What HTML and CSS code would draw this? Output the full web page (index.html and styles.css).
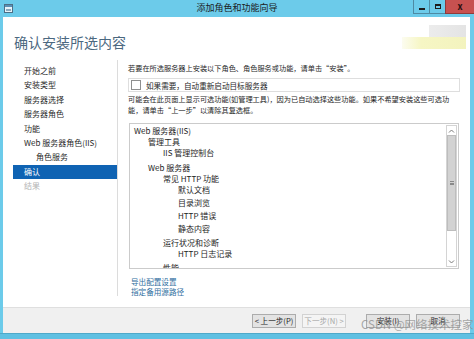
FILE: index.html
```html
<!DOCTYPE html>
<html lang="zh-CN">

<head>
    <meta charset="UTF-8">
    <title>添加角色和功能向导</title>
    <link rel="stylesheet" href="styles.css">
</head>

<body>
    <div class="window">
        <!-- Title bar -->
        <div class="titlebar">
            <svg class="app-icon" width="9" height="9" viewBox="0 0 9 9">
                <rect x="0.5" y="0.5" width="8" height="8" fill="#e8f4fa" stroke="#4d6f86"/>
                <rect x="1" y="1" width="7" height="2" fill="#5a8fb5"/>
                <rect x="2" y="5" width="5" height="2" fill="#8aa9bf"/>
            </svg>
            <span class="title">添加角色和功能向导</span>
            <div class="controls">
                <span class="ctl"><i class="min"></i></span>
                <span class="ctl"><i class="max"></i></span>
                <span class="ctl close">x</span>
            </div>
        </div>

        <div class="client">
            <!-- Page header -->
            <div class="header">
                <h1>确认安装所选内容</h1>
                <div class="server">
                    <div class="server-top"></div>
                    <div class="server-bottom"></div>
                </div>
            </div>

            <div class="main">
                <!-- Wizard steps -->
                <ul class="steps">
                    <li>开始之前</li>
                    <li>安装类型</li>
                    <li>服务器选择</li>
                    <li>服务器角色</li>
                    <li>功能</li>
                    <li>Web 服务器角色(IIS)</li>
                    <li class="sub">角色服务</li>
                    <li class="active">确认</li>
                    <li class="disabled">结果</li>
                </ul>

                <!-- Confirmation content -->
                <div class="content">
                    <p class="lead">若要在所选服务器上安装以下角色、角色服务或功能，请单击“安装”。</p>
                    <label class="restart">
                        <span class="checkbox"></span>
                        <span>如果需要，自动重新启动目标服务器</span>
                    </label>
                    <p class="note">可能会在此页面上显示可选功能(如管理工具)，因为已自动选择这些功能。如果不希望安装这些可选功<br>能，请单击“上一步”以清除其复选框。</p>

                    <div class="listbox">
                        <ul class="tree">
                            <li class="l0">Web 服务器(IIS)</li>
                            <li class="l1">管理工具</li>
                            <li class="l2">IIS 管理控制台</li>
                            <li class="l1 gap4">Web 服务器</li>
                            <li class="l2">常见 HTTP 功能</li>
                            <li class="l3">默认文档</li>
                            <li class="l3 gap2">目录浏览</li>
                            <li class="l3 gap2">HTTP 错误</li>
                            <li class="l3 gap2">静态内容</li>
                            <li class="l2 gap3">运行状况和诊断</li>
                            <li class="l3">HTTP 日志记录</li>
                            <li class="l2 gap3">性能</li>
                        </ul>
                        <div class="scrollbar">
                            <span class="arrow up">
                                <svg width="7" height="4" viewBox="0 0 7 4"><path d="M1 3.5 L3.5 1 L6 3.5" fill="none" stroke="#7a7a7a"/></svg>
                            </span>
                            <span class="thumb"><i></i></span>
                            <span class="track"></span>
                            <span class="arrow down">
                                <svg width="7" height="4" viewBox="0 0 7 4"><path d="M1 0.5 L3.5 3 L6 0.5" fill="none" stroke="#7a7a7a"/></svg>
                            </span>
                        </div>
                    </div>

                    <div class="links">
                        <a href="#">导出配置设置</a>
                        <a href="#">指定备用源路径</a>
                    </div>
                </div>
            </div>

            <!-- Buttons -->
            <div class="footer">
                <button class="btn">&lt; 上一步(P)</button>
                <button class="btn" disabled>下一步(N) &gt;</button>
                <button class="btn primary">安装(I)</button>
                <button class="btn">取消</button>
            </div>
        </div>

        <div class="frame-bottom"></div>
        <span class="watermark">CSDN @网络技术控家</span>
    </div>
</body>

</html>
```

FILE: styles.css
```css
body {
    margin: 0;
    font-family: "Noto Sans CJK SC", "Noto Sans", sans-serif;
    background-color: #6ccbea;
    color: #1e1e1e;
}

.window {
    position: relative;
    width: 474px;
    height: 339px;
    display: flex;
    flex-direction: column;
    overflow: hidden;
}

/* Title bar */
.titlebar {
    height: 17px;
    display: flex;
    align-items: flex-start;
    position: relative;
    background-color: #6ccbea;
}

.app-icon {
    margin: 4px 0 0 4px;
}

.title {
    position: absolute;
    left: 0;
    right: 0;
    top: 2px;
    text-align: center;
    font-size: 9px;
    line-height: 12px;
    color: #1b1b1b;
}

.controls {
    margin-left: auto;
    display: flex;
}

.ctl {
    width: 16px;
    height: 14px;
    border: 1px solid #4e8aa3;
    border-top: 0;
    border-right: 0;
    display: flex;
    align-items: center;
    justify-content: center;
    box-sizing: border-box;
}

.ctl .min {
    width: 6px;
    height: 2px;
    margin-top: 4px;
    background: #1d1d1d;
}

.ctl .max {
    width: 6px;
    height: 5px;
    border: 1px solid #1d1d1d;
    border-top-width: 2px;
    box-sizing: border-box;
}

.ctl.close {
    width: 29px;
    background-color: #c75150;
    border-color: #8f3a3a;
    color: #2b0f0f;
    font-size: 9px;
    font-weight: bold;
    line-height: 12px;
}

/* Client area */
.client {
    flex: 1;
    margin: 0 4px 0 3px;
    background: #fff;
    display: flex;
    flex-direction: column;
}

.header {
    height: 41px;
    display: flex;
    justify-content: space-between;
    align-items: flex-start;
}

.header h1 {
    margin: 16px 0 0 11px;
    font-size: 14px;
    line-height: 18px;
    font-weight: normal;
    color: #4b6880;
}

.server {
    margin: 8px 4px 0 0;
    display: flex;
    flex-direction: column;
    align-items: flex-end;
}

.server-top {
    width: 37px;
    height: 12px;
    background: linear-gradient(90deg, #ececec, #e4e4e4);
}

.server-bottom {
    width: 64px;
    height: 12px;
    background: linear-gradient(90deg, #fcfcf0, #f6f6c4 30%, #f3f3be);
}

.main {
    height: 249px;
    display: flex;
}

/* Steps */
.steps {
    list-style: none;
    margin: 2px 0 11px 0;
    padding: 4px 0 0 10px;
    width: 104px;
    border-right: 1px solid #dcdcdc;
    font-size: 8px;
}

.steps li {
    height: 14.4px;
    line-height: 14.4px;
    padding-left: 11px;
    color: #2a2a2a;
    white-space: nowrap;
}

.steps li.sub {
    padding-left: 23px;
}

.steps li.active {
    background-color: #0f63b3;
    color: #fff;
}

.steps li.disabled {
    color: #b5b5b5;
}

/* Content */
.content {
    flex: 1;
    padding: 5px 10px 0 10px;
    font-size: 8px;
    min-width: 0;
}

.lead {
    margin: 0;
    font-size: 7.2px;
    line-height: 11px;
    white-space: nowrap;
}

.restart {
    margin-top: 4px;
    height: 12px;
    border: 1px solid #dedede;
    display: flex;
    align-items: center;
    gap: 5px;
    padding-left: 2px;
    white-space: nowrap;
    font-size: 7.6px;
}

.checkbox {
    width: 8px;
    height: 8px;
    border: 1px solid #8e8f8f;
    background: #fff;
}

.note {
    margin: 2px 0 0 0;
    font-size: 7.2px;
    line-height: 10.5px;
    white-space: nowrap;
}

.listbox {
    margin: 8px 1px 0 1px;
    height: 146px;
    box-sizing: border-box;
    border: 1px solid #cbcbcb;
    display: flex;
    overflow: hidden;
}

.tree {
    flex: 1;
    list-style: none;
    margin: 0;
    padding: 1px 0 0 4px;
}

.tree li {
    line-height: 11px;
    height: 11px;
    white-space: nowrap;
}

.tree .l1 {
    padding-left: 14px;
}

.tree .l2 {
    padding-left: 29px;
}

.tree .l3 {
    padding-left: 44px;
}

.tree .gap2 {
    margin-top: 2px;
}

.tree .gap3 {
    margin-top: 3px;
}

.tree .gap4 {
    margin-top: 4px;
}

.scrollbar {
    width: 11px;
    margin: 1px 1px 1px 0;
    border: 1px solid #d4d4d4;
    box-sizing: border-box;
    display: flex;
    flex-direction: column;
}

.arrow {
    height: 9px;
    display: flex;
    align-items: center;
    justify-content: center;
}

.thumb {
    height: 94px;
    background: #d2d2d2;
    border: 1px solid #bdbdbd;
    display: flex;
    align-items: center;
    justify-content: center;
}

.thumb i {
    width: 4px;
    height: 4px;
    border-top: 1px solid #8a8a8a;
    border-bottom: 1px solid #8a8a8a;
    box-sizing: border-box;
    background: linear-gradient(#8a8a8a, #8a8a8a) center / 100% 1px no-repeat;
}

.track {
    flex: 1;
}

.links {
    margin: 8px 0 0 3px;
    display: flex;
    flex-direction: column;
    font-size: 7.6px;
}

.links a {
    line-height: 9.5px;
    color: #2f6ea0;
    text-decoration: none;
}

/* Footer */
.footer {
    height: 26px;
    box-sizing: border-box;
    border-top: 1px solid #dfdfdf;
    background: #f0f0f0;
    display: flex;
    justify-content: flex-end;
    align-items: flex-start;
    padding: 6px 10px 0 0;
    gap: 6px;
}

.btn {
    width: 44px;
    height: 14px;
    padding: 0;
    font-family: inherit;
    font-size: 7.6px;
    line-height: 12px;
    color: #1e1e1e;
    background: #e3e3e3;
    border: 1px solid #acacac;
}

.btn:disabled {
    color: #a6a6a6;
    background: #f4f4f4;
    border-color: #d2d2d2;
}

.btn.primary {
    margin-left: 14px;
}

.frame-bottom {
    height: 6px;
    background: #5fc0e2;
    border-top: 1px solid #4fa9c9;
    box-sizing: border-box;
}

.watermark {
    position: absolute;
    left: 361px;
    top: 317px;
    font-size: 11.5px;
    line-height: 14px;
    color: rgba(140, 140, 140, 0.75);
    white-space: nowrap;
}
```
